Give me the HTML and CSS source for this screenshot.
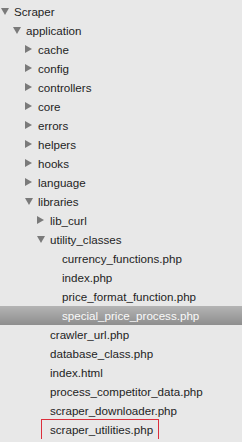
FILE: index.html
```html
<!DOCTYPE html>
<html lang="en">
<head>
  <meta charset="UTF-8">
  <title>Scraper</title>
  <link rel="stylesheet" href="styles.css">
</head>
<body>
  <ul class="tree">
    <li class="row d0"><span class="twisty open"></span>Scraper</li>
    <li class="row d1"><span class="twisty open"></span>application</li>
    <li class="row d2"><span class="twisty"></span>cache</li>
    <li class="row d2"><span class="twisty"></span>config</li>
    <li class="row d2"><span class="twisty"></span>controllers</li>
    <li class="row d2"><span class="twisty"></span>core</li>
    <li class="row d2"><span class="twisty"></span>errors</li>
    <li class="row d2"><span class="twisty"></span>helpers</li>
    <li class="row d2"><span class="twisty"></span>hooks</li>
    <li class="row d2"><span class="twisty"></span>language</li>
    <li class="row d2"><span class="twisty open"></span>libraries</li>
    <li class="row d3"><span class="twisty"></span>lib_curl</li>
    <li class="row d3"><span class="twisty open"></span>utility_classes</li>
    <li class="row d4"><span class="leaf"></span>currency_functions.php</li>
    <li class="row d4"><span class="leaf"></span>index.php</li>
    <li class="row d4"><span class="leaf"></span>price_format_function.php</li>
    <li class="row d4 selected"><span class="leaf"></span>special_price_process.php</li>
    <li class="row d3"><span class="leaf"></span>crawler_url.php</li>
    <li class="row d3"><span class="leaf"></span>database_class.php</li>
    <li class="row d3"><span class="leaf"></span>index.html</li>
    <li class="row d3"><span class="leaf"></span>process_competitor_data.php</li>
    <li class="row d3"><span class="leaf"></span>scraper_downloader.php</li>
    <li class="row d3"><span class="leaf"></span><span class="marked">scraper_utilities.php</span></li>
  </ul>
</body>
</html>
```

FILE: styles.css
```css
body {
  margin: 0;
  padding: 0;
  background-color: #e8e8e8;
  font-family: "Liberation Sans", Arial, sans-serif;
  font-size: 11.6px;
  color: #1e1e1e;
}
.tree {
  list-style: none;
  margin: 0;
  padding: 2px 0 0 0;
}
.row {
  display: flex;
  align-items: center;
  height: 19px;
  white-space: nowrap;
}
.d0 { padding-left: 1px; }
.d1 { padding-left: 13px; }
.d2 { padding-left: 25px; }
.d3 { padding-left: 37px; }
.d4 { padding-left: 49px; }
.twisty,
.leaf {
  flex: none;
  width: 13px;
  height: 9px;
  position: relative;
}
/* closed folder arrow */
.twisty::before {
  content: "";
  position: absolute;
  left: 0;
  top: 0;
  border-style: solid;
  border-width: 4.5px 0 4.5px 7px;
  border-color: transparent transparent transparent #7a7a7a;
}
/* open folder arrow */
.twisty.open::before {
  top: 1px;
  border-width: 7px 4px 0 4px;
  border-color: #7a7a7a transparent transparent transparent;
}
.selected {
  background: linear-gradient(#b4b4b4, #8e8e8e);
  color: #fafafa;
}
.marked {
  margin-left: -9px;
  padding: 3px 5px 3px 8px;
  border: 1px solid #dc2f3c;
}
```
